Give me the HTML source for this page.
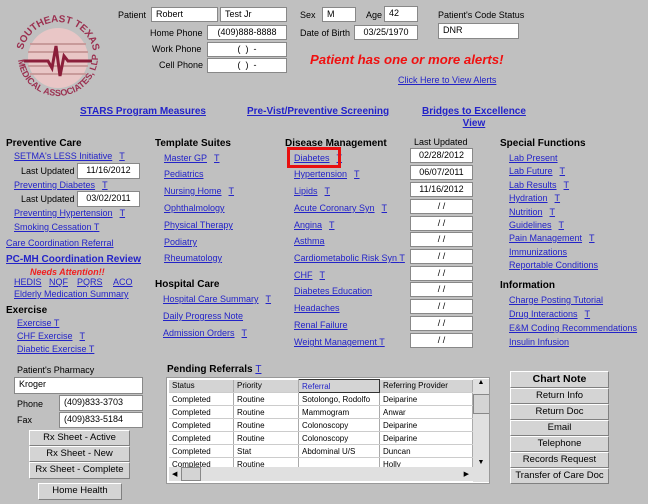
<!DOCTYPE html>
<html><head><meta charset="utf-8"><style>
body{margin:0;width:648px;height:504px;background:#c0c0c0;font-family:"Liberation Sans",Arial,sans-serif;font-size:9px;color:#000;position:relative;overflow:hidden}
.a{position:absolute;white-space:nowrap}
.l{position:absolute;white-space:nowrap;color:#2323c8;text-decoration:underline}
.b{font-weight:bold;font-size:10px}
.box{position:absolute;background:#fff;border:1px solid #888;box-sizing:border-box;font-size:9px;line-height:13px;padding-left:4px}
.c{text-align:center;padding-left:0}
.btn{position:absolute;background:#d4d4d4;border:1px solid #fff;border-right-color:#808080;border-bottom-color:#808080;box-sizing:border-box;text-align:center;font-size:9.5px;line-height:14px}
.t{margin-left:7px}
table{border-collapse:collapse}
td{border-right:1px solid #aaa;border-bottom:1px solid #ccc;font-size:8px;height:12px;padding:0 3px;white-space:nowrap;overflow:hidden}
</style></head><body>
<svg class="a" style="left:8px;top:6px" width="100" height="100" viewBox="0 0 100 100">
<circle cx="50" cy="52" r="30" fill="#e9c6c6"/>
<g stroke="#c89a9a" stroke-width="2"><line x1="22" y1="38" x2="78" y2="38"/><line x1="20" y1="46" x2="80" y2="46"/><line x1="20" y1="60" x2="80" y2="60"/><line x1="22" y1="68" x2="78" y2="68"/></g>
<path d="M16 55 H40 L44 62 L48 40 L52 70 L56 50 L60 55 H84" stroke="#8b1e3a" stroke-width="3" fill="none"/>
<path id="top" d="M14 52 A36 36 0 0 1 86 52" fill="none"/>
<path id="bot" d="M10 50 A40 40 0 0 0 90 50" fill="none"/>
<text font-size="10" font-weight="bold" fill="#9b3050" font-family="Liberation Sans"><textPath href="#top" startOffset="8">SOUTHEAST TEXAS</textPath></text>
<text font-size="9" font-weight="bold" fill="#9b3050" font-family="Liberation Sans"><textPath href="#bot" startOffset="4">MEDICAL ASSOCIATES, LLP</textPath></text>
</svg>
<div class="a" style="left:118px;top:10px">Patient</div>
<div class="box" style="left:151px;top:7px;width:67px;height:15px">Robert</div>
<div class="box" style="left:220px;top:7px;width:67px;height:15px">Test Jr</div>
<div class="a" style="left:150px;top:28px">Home Phone</div>
<div class="box c" style="left:207px;top:25px;width:80px;height:15px">(409)888-8888</div>
<div class="a" style="left:152px;top:44px">Work Phone</div>
<div class="box c" style="left:207px;top:42px;width:80px;height:15px">(&nbsp;&nbsp;)&nbsp;&nbsp;-</div>
<div class="a" style="left:159px;top:60px">Cell Phone</div>
<div class="box c" style="left:207px;top:58px;width:80px;height:15px">(&nbsp;&nbsp;)&nbsp;&nbsp;-</div>
<div class="a" style="left:300px;top:10px">Sex</div>
<div class="box" style="left:322px;top:7px;width:34px;height:15px">M</div>
<div class="a" style="left:366px;top:10px">Age</div>
<div class="box" style="left:384px;top:6px;width:34px;height:16px">42</div>
<div class="a" style="left:438px;top:10px">Patient's Code Status</div>
<div class="box" style="left:438px;top:23px;width:81px;height:16px">DNR</div>
<div class="a" style="left:300px;top:28px">Date of Birth</div>
<div class="box c" style="left:354px;top:25px;width:64px;height:15px">03/25/1970</div>
<div class="a" style="left:310px;top:52px;color:#f01010;font-weight:bold;font-style:italic;font-size:13.2px">Patient has one or more alerts!</div>
<div class="l" style="left:398px;top:75px">Click Here to View Alerts</div>
<div class="l b" style="left:80px;top:106px">STARS Program Measures</div>
<div class="l b" style="left:247px;top:106px">Pre-Vist/Preventive Screening</div>
<div class="l b" style="left:422px;top:106px;text-align:center;line-height:12px">Bridges to Excellence<br>View</div>

<div class="a b" style="left:6px;top:138px">Preventive Care</div>
<div class="l" style="left:14px;top:151px">SETMA's LESS Initiative<span class="t">T</span></div>
<div class="a" style="left:21px;top:166px">Last Updated</div>
<div class="box c" style="left:77px;top:163px;width:63px;height:16px">11/16/2012</div>
<div class="l" style="left:14px;top:180px">Preventing Diabetes<span class="t">T</span></div>
<div class="a" style="left:21px;top:194px">Last Updated</div>
<div class="box c" style="left:77px;top:191px;width:63px;height:16px">03/02/2011</div>
<div class="l" style="left:14px;top:208px">Preventing Hypertension<span class="t">T</span></div>
<div class="l" style="left:14px;top:222px">Smoking Cessation <span>T</span></div>
<div class="l" style="left:6px;top:238px">Care Coordination Referral</div>
<div class="l b" style="left:6px;top:254px">PC-MH Coordination Review</div>
<div class="a" style="left:30px;top:267px;color:#f02020;font-weight:bold;font-style:italic">Needs Attention!!</div>
<div class="l" style="left:14px;top:277px">HEDIS</div><div class="l" style="left:49px;top:277px">NQF</div><div class="l" style="left:77px;top:277px">PQRS</div><div class="l" style="left:113px;top:277px">ACO</div>
<div class="l" style="left:14px;top:289px">Elderly Medication Summary</div>
<div class="a b" style="left:6px;top:305px">Exercise</div>
<div class="l" style="left:17px;top:318px">Exercise <span>T</span></div>
<div class="l" style="left:17px;top:331px">CHF Exercise<span class="t">T</span></div>
<div class="l" style="left:17px;top:344px">Diabetic Exercise <span>T</span></div>

<div class="a b" style="left:155px;top:138px">Template Suites</div>
<div class="l" style="left:164px;top:153px">Master GP<span class="t">T</span></div>
<div class="l" style="left:164px;top:169px">Pediatrics</div>
<div class="l" style="left:164px;top:186px">Nursing Home<span class="t">T</span></div>
<div class="l" style="left:164px;top:203px">Ophthalmology</div>
<div class="l" style="left:164px;top:220px">Physical Therapy</div>
<div class="l" style="left:164px;top:237px">Podiatry</div>
<div class="l" style="left:164px;top:253px">Rheumatology</div>
<div class="a b" style="left:155px;top:279px">Hospital Care</div>
<div class="l" style="left:163px;top:294px">Hospital Care Summary<span class="t">T</span></div>
<div class="l" style="left:163px;top:311px">Daily Progress Note</div>
<div class="l" style="left:163px;top:328px">Admission Orders<span class="t">T</span></div>

<div class="a b" style="left:285px;top:138px">Disease Management</div>
<div class="a" style="left:414px;top:137px">Last Updated</div>
<div class="l" style="left:294px;top:153px">Diabetes<span class="t">T</span></div>
<div class="a" style="left:287px;top:147px;width:48px;height:15px;border:3px solid #e81010"></div>
<div class="l" style="left:294px;top:169px">Hypertension<span class="t">T</span></div>
<div class="l" style="left:294px;top:186px">Lipids<span class="t">T</span></div>
<div class="l" style="left:294px;top:203px">Acute Coronary Syn<span class="t">T</span></div>
<div class="l" style="left:294px;top:220px">Angina<span class="t">T</span></div>
<div class="l" style="left:294px;top:236px">Asthma</div>
<div class="l" style="left:294px;top:253px">Cardiometabolic Risk Syn <span>T</span></div>
<div class="l" style="left:294px;top:270px">CHF<span class="t">T</span></div>
<div class="l" style="left:294px;top:286px">Diabetes Education</div>
<div class="l" style="left:294px;top:303px">Headaches</div>
<div class="l" style="left:294px;top:320px">Renal Failure</div>
<div class="l" style="left:294px;top:337px">Weight Management <span>T</span></div>
<div class="box c" style="left:410px;top:148px;width:63px;height:15px">02/28/2012</div>
<div class="box c" style="left:410px;top:165px;width:63px;height:15px">06/07/2011</div>
<div class="box c" style="left:410px;top:182px;width:63px;height:15px">11/16/2012</div>
<div class="box c" style="left:410px;top:199px;width:63px;height:15px">/ /</div>
<div class="box c" style="left:410px;top:216px;width:63px;height:15px">/ /</div>
<div class="box c" style="left:410px;top:232px;width:63px;height:15px">/ /</div>
<div class="box c" style="left:410px;top:249px;width:63px;height:15px">/ /</div>
<div class="box c" style="left:410px;top:266px;width:63px;height:15px">/ /</div>
<div class="box c" style="left:410px;top:282px;width:63px;height:15px">/ /</div>
<div class="box c" style="left:410px;top:299px;width:63px;height:15px">/ /</div>
<div class="box c" style="left:410px;top:316px;width:63px;height:15px">/ /</div>
<div class="box c" style="left:410px;top:333px;width:63px;height:15px">/ /</div>

<div class="a b" style="left:500px;top:138px">Special Functions</div>
<div class="l" style="left:509px;top:153px">Lab Present</div>
<div class="l" style="left:509px;top:166px">Lab Future<span class="t">T</span></div>
<div class="l" style="left:509px;top:180px">Lab Results<span class="t">T</span></div>
<div class="l" style="left:509px;top:193px">Hydration<span class="t">T</span></div>
<div class="l" style="left:509px;top:207px">Nutrition<span class="t">T</span></div>
<div class="l" style="left:509px;top:220px">Guidelines<span class="t">T</span></div>
<div class="l" style="left:509px;top:233px">Pain Management<span class="t">T</span></div>
<div class="l" style="left:509px;top:247px">Immunizations</div>
<div class="l" style="left:509px;top:260px">Reportable Conditions</div>
<div class="a b" style="left:500px;top:280px">Information</div>
<div class="l" style="left:509px;top:295px">Charge Posting Tutorial</div>
<div class="l" style="left:509px;top:309px">Drug Interactions<span class="t">T</span></div>
<div class="l" style="left:509px;top:323px">E&amp;M Coding Recommendations</div>
<div class="l" style="left:509px;top:337px">Insulin Infusion</div>

<div class="a" style="left:17px;top:365px">Patient's Pharmacy</div>
<div class="box" style="left:14px;top:377px;width:129px;height:17px">Kroger</div>
<div class="a" style="left:17px;top:399px">Phone</div>
<div class="box" style="left:59px;top:395px;width:84px;height:16px">(409)833-3703</div>
<div class="a" style="left:17px;top:415px">Fax</div>
<div class="box" style="left:59px;top:412px;width:84px;height:16px">(409)833-5184</div>
<div class="btn" style="left:29px;top:430px;width:101px;height:16px">Rx Sheet - Active</div>
<div class="btn" style="left:29px;top:446px;width:101px;height:16px">Rx Sheet - New</div>
<div class="btn" style="left:29px;top:462px;width:101px;height:17px">Rx Sheet - Complete</div>
<div class="btn" style="left:38px;top:483px;width:84px;height:17px">Home Health</div>

<div class="a b" style="left:167px;top:364px">Pending Referrals <span style="color:#2323c8;text-decoration:underline;font-weight:normal">T</span></div>
<div class="a" style="left:166px;top:377px;width:324px;height:107px;background:#fff;border:1px solid #999;box-sizing:border-box;overflow:hidden">
<table style="position:absolute;left:2px;top:1px;width:304px;table-layout:fixed">
<tr style="background:#d4d4d4"><td style="width:58px">Status</td><td style="width:58px">Priority</td><td style="width:74px;color:#2323c8;border:1px solid #333">Referral</td><td>Referring Provider</td></tr>
<tr><td>Completed</td><td>Routine</td><td>Sotolongo, Rodolfo</td><td>Deiparine</td></tr>
<tr><td>Completed</td><td>Routine</td><td>Mammogram</td><td>Anwar</td></tr>
<tr><td>Completed</td><td>Routine</td><td>Colonoscopy</td><td>Deiparine</td></tr>
<tr><td>Completed</td><td>Routine</td><td>Colonoscopy</td><td>Deiparine</td></tr>
<tr><td>Completed</td><td>Stat</td><td>Abdominal U/S</td><td>Duncan</td></tr>
<tr><td>Completed</td><td>Routine</td><td></td><td>Holly</td></tr>
</table>
<div class="a" style="left:306px;top:1px;width:16px;height:103px;background:#e0e0e0"><div style="font-size:7px;text-align:center">▲</div><div style="position:absolute;top:15px;left:0;width:15px;height:18px;background:#d4d4d4;border:1px solid #888"></div><div style="position:absolute;top:80px;width:16px;font-size:7px;text-align:center">▼</div></div>
<div class="a" style="left:2px;top:89px;width:304px;height:14px;background:#e0e0e0"><span style="font-size:7px;position:absolute;left:3px;top:3px">◀</span><div style="position:absolute;left:12px;top:0;width:18px;height:12px;background:#d4d4d4;border:1px solid #888"></div><span style="font-size:7px;position:absolute;right:4px;top:3px">▶</span></div>
</div>

<div class="btn" style="left:510px;top:371px;width:99px;height:17px;font-weight:bold;font-size:10.5px">Chart Note</div>
<div class="btn" style="left:510px;top:388px;width:99px;height:16px">Return Info</div>
<div class="btn" style="left:510px;top:404px;width:99px;height:16px">Return Doc</div>
<div class="btn" style="left:510px;top:420px;width:99px;height:16px">Email</div>
<div class="btn" style="left:510px;top:436px;width:99px;height:16px">Telephone</div>
<div class="btn" style="left:510px;top:452px;width:99px;height:16px">Records Request</div>
<div class="btn" style="left:510px;top:468px;width:99px;height:16px">Transfer of Care Doc</div>
</body></html>
